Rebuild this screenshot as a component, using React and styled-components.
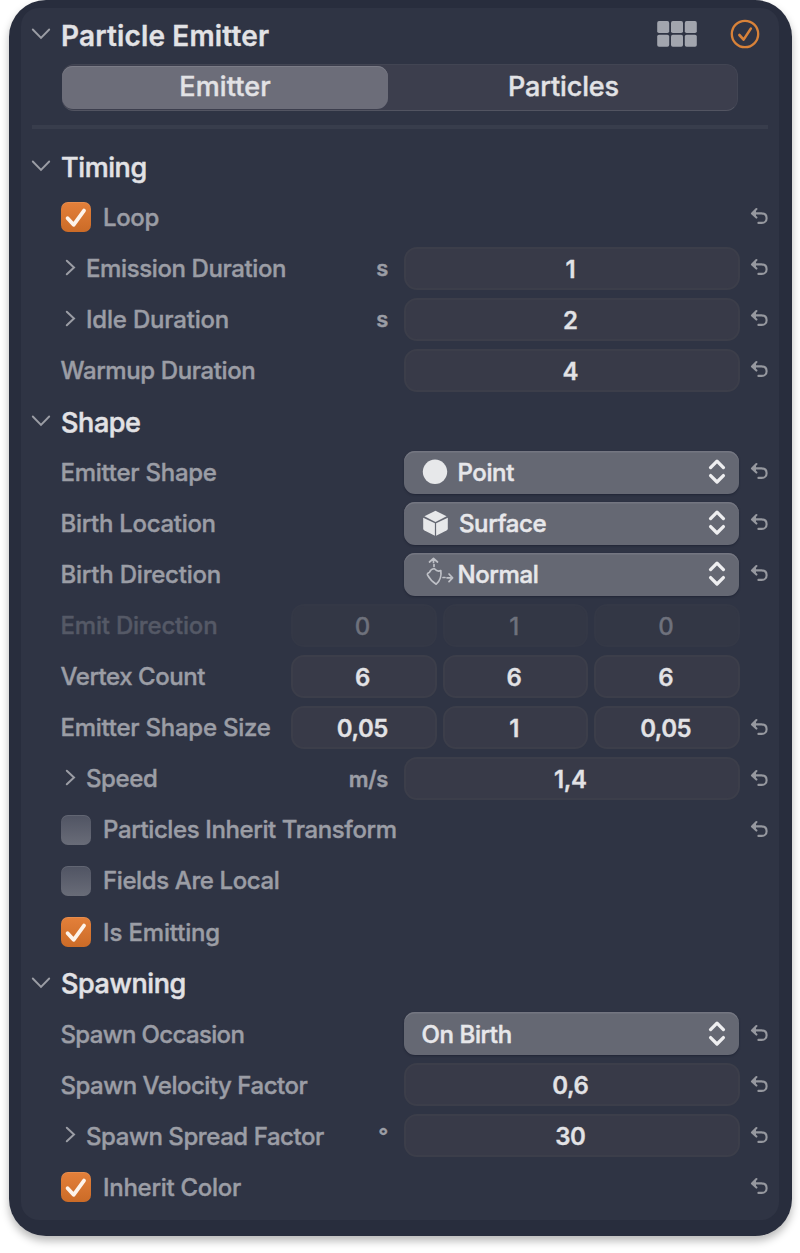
import React, { useState } from "react";
import styled, { createGlobalStyle, css } from "styled-components";

const sections = [
  {
    title: "Timing",
    rows: [
      { type: "check", label: "Loop", checked: true, reset: true },
      { type: "number", label: "Emission Duration", nested: true, unit: "s", values: ["1"], reset: true },
      { type: "number", label: "Idle Duration", tracking: -0.2, nested: true, unit: "s", values: ["2"], reset: true },
      { type: "number", label: "Warmup Duration", values: ["4"], reset: true },
    ],
  },
  {
    title: "Shape",
    rows: [
      { type: "select", label: "Emitter Shape", tracking: -0.26, value: "Point", icon: "point", reset: true },
      { type: "select", label: "Birth Location", tracking: -0.3, value: "Surface", icon: "cube", reset: true },
      { type: "select", label: "Birth Direction", tracking: -0.22, value: "Normal", icon: "normal", reset: true },
      { type: "number", label: "Emit Direction", tracking: -0.2, values: ["0", "1", "0"], disabled: true },
      { type: "number", label: "Vertex Count", tracking: -0.46, values: ["6", "6", "6"] },
      { type: "number", label: "Emitter Shape Size", tracking: -0.25, values: ["0,05", "1", "0,05"], reset: true },
      { type: "number", label: "Speed", nested: true, unit: "m/s", values: ["1,4"], reset: true },
      { type: "check", label: "Particles Inherit Transform", reset: true },
      { type: "check", label: "Fields Are Local" },
      { type: "check", label: "Is Emitting", tracking: -0.15, checked: true },
    ],
  },
  {
    title: "Spawning",
    rows: [
      { type: "select", label: "Spawn Occasion", tracking: -0.65, value: "On Birth", reset: true },
      { type: "number", label: "Spawn Velocity Factor", tracking: -0.48, values: ["0,6"], reset: true },
      { type: "number", label: "Spawn Spread Factor", tracking: -0.43, nested: true, unit: "°", values: ["30"], reset: true },
      { type: "check", label: "Inherit Color", tracking: -0.28, checked: true, reset: true },
    ],
  },
];

const ChevronDown = () => (
  <svg width="20" height="12" viewBox="0 0 20 12" fill="none">
    <path d="M1.8 1.5L10 10L18.2 1.5" stroke="#9b9da5" strokeWidth="1.9" strokeLinecap="round" />
  </svg>
);

const ChevronRight = () => (
  <svg width="11" height="17" viewBox="0 0 11 17" fill="none">
    <path d="M1.8 1.8L9 8.5L1.8 15.2" stroke="#9b9da5" strokeWidth="2" strokeLinecap="round" />
  </svg>
);

const ResetIcon = () => (
  <svg width="18" height="18" viewBox="0 0 18 18" fill="none">
    <path
      d="M6.4 2L2 6.4L6.4 10.6M2.4 6.4H11.5C14.8 6.4 16.6 8.4 16.6 11.2C16.6 14 14.6 15.9 11.8 15.9H8.4"
      stroke="#96989f"
      strokeWidth="2.1"
      strokeLinecap="round"
      strokeLinejoin="round"
    />
    <path d="M6 3V9.8L2.4 6.4Z" fill="#96989f" />
  </svg>
);

const GridIcon = () => (
  <svg width="40" height="26" viewBox="0 0 40 26" fill="#a2a5ae">
    {[0, 13.6].map((y) =>
      [0, 13.8, 27.6].map((x) => (
        <rect key={`${x}-${y}`} x={x + 0.2} y={y + 0.1} width="12" height="12" rx="1.8" />
      ))
    )}
  </svg>
);

const EnabledIcon = () => (
  <svg width="30" height="30" viewBox="0 0 30 30" fill="none" stroke="#d88239">
    <circle cx="15" cy="15" r="13.2" strokeWidth="2.3" />
    <path d="M9.4 16L13.6 20.6L20.8 9.6" strokeWidth="2.6" strokeLinecap="round" strokeLinejoin="round" />
  </svg>
);

const CheckMark = () => (
  <svg width="30" height="30" viewBox="0 0 30 30" fill="none">
    <path d="M6.6 16.2L12.6 22.8L23 8.6" stroke="#fdf3ea" strokeWidth="3.8" strokeLinecap="round" strokeLinejoin="round" />
  </svg>
);

const UpDownIcon = () => (
  <svg width="18" height="26" viewBox="0 0 18 26" fill="none" stroke="#eeeef0" strokeWidth="3.3" strokeLinecap="round" strokeLinejoin="round">
    <path d="M2.6 8.6L9 2.2L15.4 8.6" />
    <path d="M2.6 16.6L9 23L15.4 16.6" />
  </svg>
);

const PointIcon = () => (
  <svg width="26" height="26" viewBox="0 0 26 26">
    <circle cx="13" cy="12.8" r="12.2" fill="#e7e8ea" />
  </svg>
);

const CubeIcon = () => (
  <svg width="26" height="26" viewBox="0 0 26 26" fill="#e7e8ea">
    <path d="M13.5 0.8L24.6 6.3L13.5 12L2.4 6.3Z" />
    <path d="M1.2 7.8L12.9 13.3V25.7L2.5 20.6Q1.2 19.9 1.2 18.5Z" />
    <path d="M25.8 7.8L14.1 13.3V25.7L24.5 20.6Q25.8 19.9 25.8 18.5Z" />
  </svg>
);

const NormalIcon = () => (
  <svg width="28" height="30" viewBox="0 0 28 30" fill="none" stroke="#bfc1c7" strokeWidth="1.7" strokeLinecap="round" strokeLinejoin="round">
    <path d="M3.5 5L7.5 1.5L11.5 5M7.5 2.5V5.5M8 7.5V9.5" />
    <path d="M8.5 11.8C6 11.5 4.5 13 3.5 15.2C1.8 15.8 1 17 1.6 18.2C3.5 21.7 6.5 25 10.2 27.2C13.8 24 15.6 18.5 14.8 13.5C12.5 14.6 10.5 14 8.5 11.8Z" />
    <path d="M17 20.5H19M21 20.8H26.3M23 17L26.6 20.8L23 24.6" />
  </svg>
);

const icons = { point: PointIcon, cube: CubeIcon, normal: NormalIcon };

function Control({ row }) {
  if (row.type === "select") {
    const Icon = icons[row.icon];
    return (
      <Select>
        {Icon && (
          <SelectIcon $kind={row.icon}>
            <Icon />
          </SelectIcon>
        )}
        <SelectText>{row.value}</SelectText>
        <UpDownIcon />
      </Select>
    );
  }
  if (row.type === "number") {
    return (
      <Fields $multi={row.values.length > 1}>
        {row.values.map((value, i) => (
          <Field key={i} $disabled={row.disabled}>
            {value}
          </Field>
        ))}
      </Fields>
    );
  }
  return null;
}

function PropertyRow({ row }) {
  const [checked, setChecked] = useState(!!row.checked);

  return (
    <Row>
      {row.type === "check" && (
        <Checkbox
          role="checkbox"
          aria-checked={checked}
          aria-label={row.label}
          $checked={checked}
          onClick={() => setChecked(!checked)}
        >
          {checked && <CheckMark />}
        </Checkbox>
      )}
      {row.nested && (
        <Disclosure>
          <ChevronRight />
        </Disclosure>
      )}
      <Label $disabled={row.disabled} $tracking={row.tracking}>
        {row.label}
      </Label>
      {row.unit && <Unit>{row.unit}</Unit>}
      <Control row={row} />
      <Reset>{row.reset && <ResetIcon />}</Reset>
    </Row>
  );
}

export default function App() {
  const [tab, setTab] = useState("Emitter");

  return (
    <>
      <GlobalStyle />
      <Frame>
        <Panel>
          <Header>
            <ChevronDown />
            <Title>Particle Emitter</Title>
            <GridIcon />
            <EnabledIcon />
          </Header>
          <Tabs>
            {["Emitter", "Particles"].map((name) => (
              <Tab key={name} $active={tab === name} onClick={() => setTab(name)}>
                {name}
              </Tab>
            ))}
          </Tabs>
          <Divider />
          {sections.map((section) => (
            <section key={section.title}>
              <SectionHeader>
                <ChevronDown />
                <SectionTitle>{section.title}</SectionTitle>
              </SectionHeader>
              {section.rows.map((row) => (
                <PropertyRow key={row.label} row={row} />
              ))}
            </section>
          ))}
        </Panel>
      </Frame>
    </>
  );
}

const GlobalStyle = createGlobalStyle`
  * {
    box-sizing: border-box;
  }
  body {
    margin: 0;
    background: #fff;
    font-family: Inter, "Liberation Sans", sans-serif;
    overflow: hidden;
  }
  svg {
    display: block;
    flex-shrink: 0;
  }
`;

const Frame = styled.div`
  width: 783px;
  height: 1236px;
  margin: 0 0 17px 9px;
  padding: 8px 13px 16px 12px;
  background: #282d3d;
  border-radius: 37px;
  box-shadow: 0 5px 8px rgba(0, 0, 0, 0.28);
`;

const Panel = styled.div`
  height: 1212px;
  background: #2f3444;
  border-radius: 18px;
`;

const Header = styled.div`
  display: flex;
  align-items: center;
  height: 55px;
  padding: 0 19.5px 3px 10px;
`;

const Title = styled.h1`
  flex: 1;
  margin: 3px 0 0 10px;
  font-size: 28px;
  font-weight: 600;
  letter-spacing: 0.15px;
  line-height: 32px;
  -webkit-text-stroke: 0.3px;
  color: #e2e2e5;
  & + svg {
    margin-right: 33px;
  }
`;

const Tabs = styled.div`
  display: grid;
  grid-template-columns: 326px 1fr;
  width: 676px;
  height: 47px;
  margin: 1px 0 0 41px;
  padding: 1px 0;
  background: #3c3e4d;
  border: 1px solid #424553;
  border-left: none;
  border-bottom-color: #525461;
  border-radius: 12px;
`;

const Tab = styled.button`
  padding: 0 0 3px 2px;
  border: none;
  border-radius: 11px;
  background: transparent;
  font-family: inherit;
  font-size: 27px;
  font-weight: 500;
  letter-spacing: -0.15px;
  -webkit-text-stroke: 0.4px;
  color: #e2e2e5;
  cursor: pointer;
  ${(props) =>
    props.$active &&
    css`
      padding-left: 0;
      background: #6c6d79;
      box-shadow: inset 0 1px 0 #7b7c87;
      letter-spacing: 0.1px;
    `}
`;

const Divider = styled.div`
  height: 4px;
  margin: 14px 11px 11.5px;
  background: #383d4c;
`;

const SectionHeader = styled.div`
  display: flex;
  align-items: center;
  height: 51.06px;
  padding-left: 10px;
`;

const SectionTitle = styled.h2`
  margin: 3px 0 0 10px;
  font-size: 27px;
  font-weight: 500;
  letter-spacing: -0.4px;
  line-height: 32px;
  -webkit-text-stroke: 0.5px;
  color: #e2e2e5;
`;

const Row = styled.div`
  display: flex;
  align-items: center;
  height: 51.06px;
  padding: 0 11px 0 39.5px;
`;

const Label = styled.span`
  flex: 1;
  margin-top: 1.6px;
  font-size: 24px;
  font-weight: 500;
  letter-spacing: ${(props) => props.$tracking ?? -0.39}px;
  line-height: 30px;
  white-space: nowrap;
  -webkit-text-stroke: 0.4px;
  color: ${(props) => (props.$disabled ? "#555966" : "#9b9da5")};
`;

const Unit = styled.span`
  margin-right: 15.5px;
  font-size: 22px;
  font-weight: 600;
  letter-spacing: -0.3px;
  -webkit-text-stroke: 0.4px;
  color: #9b9da5;
`;

const Disclosure = styled.span`
  margin: 0 10px 2px 4.5px;
`;

const Checkbox = styled.button`
  width: 30px;
  height: 30px;
  margin: 0 12px 0 0.5px;
  padding: 0;
  border: none;
  border-radius: 7px;
  cursor: pointer;
  background: ${(props) =>
    props.$checked
      ? "linear-gradient(#e4803a, #cb6b27)"
      : "linear-gradient(#505463, #696c78)"};
  box-shadow: inset 0 1px 0 rgba(255, 255, 255, 0.1);
`;

const Fields = styled.div`
  display: grid;
  grid-auto-flow: column;
  grid-auto-columns: 1fr;
  gap: 6px;
  width: ${(props) => (props.$multi ? "449px" : "336.5px")};
`;

const Field = styled.div`
  display: flex;
  align-items: center;
  justify-content: center;
  height: 43px;
  padding: 2px 3px 0 0;
  border: 2px solid #3c3e4a;
  border-radius: 13px;
  background: #383a48;
  font-size: 24px;
  font-weight: 600;
  letter-spacing: -0.5px;
  -webkit-text-stroke: 0.3px;
  color: #e2e2e5;
  ${(props) =>
    props.$disabled &&
    css`
      border-color: #343846;
      background: #333745;
      font-weight: 500;
      color: #6e717c;
    `}
`;

const Select = styled.div`
  display: flex;
  align-items: center;
  width: 335px;
  height: 43px;
  margin-right: 1px;
  padding: 0 13px 0 17.5px;
  border-radius: 11px;
  background: #656873;
  box-shadow: inset 0 1.5px 0 #747681, 0 1px 2px rgba(20, 24, 40, 0.5);
`;

const SelectIcon = styled.span`
  width: 28px;
  margin-right: ${(props) => (props.$kind === "cube" ? "9.5px" : "8px")};
  ${(props) =>
    props.$kind === "normal" &&
    css`
      padding-left: 4.5px;
      padding-bottom: 4px;
    `}
`;

const SelectText = styled.span`
  flex: 1;
  margin-top: 1px;
  font-size: 24px;
  font-weight: 500;
  letter-spacing: -0.4px;
  -webkit-text-stroke: 0.5px;
  color: #e7e7ea;
`;

const Reset = styled.span`
  width: 18px;
  margin: 0 0 2px 10px;
`;
